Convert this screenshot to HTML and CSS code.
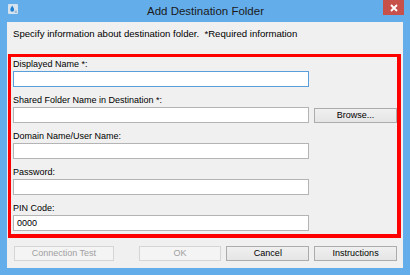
FILE: index.html
```html
<!DOCTYPE html>
<html>
<head>
<meta charset="utf-8">
<link rel="stylesheet" href="styles.css">
</head>
<body>
<div class="window">
  <div class="titlebar">
    <div class="appicon">
      <svg width="10" height="10" viewBox="0 0 10 10">
        <rect x="0" y="0" width="10" height="10" rx="1" fill="#d6e2ee"/>
        <path d="M4.2 1.5 C3.3 3.3 2.3 4.3 2.3 5.8 A1.9 1.9 0 0 0 6.1 5.8 C6.1 4.3 5.1 3.3 4.2 1.5 Z" fill="#1f7fd0"/>
        <rect x="6.8" y="6.5" width="2" height="2.5" fill="#9bb7d3"/>
      </svg>
    </div>
    <div class="title">Add Destination Folder</div>
    <div class="close">
      <svg width="8" height="8" viewBox="0 0 8 8"><path d="M1 1 L7 7 M7 1 L1 7" stroke="#fff" stroke-width="1.8"/></svg>
    </div>
  </div>
  <div class="content">
    <div class="intro">Specify information about destination folder.&nbsp; *Required information</div>
    <div class="group">
      <div class="label">Displayed Name *:</div>
      <div class="row"><div class="input focused"></div></div>
      <div class="label">Shared Folder Name in Destination *:</div>
      <div class="row"><div class="input"></div><div class="btn browse">Browse...</div></div>
      <div class="label">Domain Name/User Name:</div>
      <div class="row"><div class="input"></div></div>
      <div class="label">Password:</div>
      <div class="row"><div class="input"></div></div>
      <div class="label">PIN Code:</div>
      <div class="row last"><div class="input">0000</div></div>
    </div>
    <div class="buttons">
      <div class="btn disabled wide">Connection Test</div>
      <div class="btn disabled ok">OK</div>
      <div class="btn">Cancel</div>
      <div class="btn">Instructions</div>
    </div>
  </div>
</div>
</body>
</html>
```
FILE: styles.css
```css
html, body {
  margin: 0;
  padding: 0;
}
body {
  font-family: "Liberation Sans", Arial, sans-serif;
  font-size: 9px;
  color: #000;
  background: #64adeb;
}
.window {
  width: 410px;
  height: 275px;
  box-sizing: border-box;
  background: #64adeb;
  padding: 0 7px 7px 7px;
  display: flex;
  flex-direction: column;
}
.titlebar {
  height: 22px;
  flex: none;
  display: flex;
  align-items: flex-start;
  position: relative;
}
.appicon {
  margin: 4px 0 0 1px;
  width: 10px;
  height: 10px;
  display: flex;
}
.title {
  flex: 1;
  text-align: center;
  font-size: 11.5px;
  line-height: 22px;
  color: #1a1a1a;
  margin-left: -10px;
}
.close {
  position: absolute;
  right: -1px;
  top: 0;
  width: 21px;
  height: 15px;
  background: #c7504b;
  display: flex;
  align-items: center;
  justify-content: center;
}
.content {
  flex: 1;
  background: #f0f0f0;
  padding: 6px 6px 0 1px;
  display: flex;
  flex-direction: column;
}
.intro {
  font-size: 9.6px;
  line-height: 12px;
  padding-left: 5px;
  margin-bottom: 14px;
}
.group {
  border: 3px solid #ff0000;
  border-right-width: 4px;
  border-bottom-width: 4px;
  padding: 1px 0 3px 2px;
  margin-right: -4px;
}
.label {
  line-height: 12px;
  margin-bottom: 1px;
}
.row {
  display: flex;
  align-items: center;
  gap: 5px;
  margin-bottom: 7px;
}
.row.last {
  margin-bottom: 0;
}
.input {
  width: 296px;
  height: 16px;
  box-sizing: border-box;
  border: 1px solid #b4b4b4;
  background: #fff;
  line-height: 14px;
  padding-left: 3px;
}
.input.focused {
  border-color: #5a9fdb;
}
.btn {
  width: 83px;
  height: 15px;
  box-sizing: border-box;
  border: 1px solid #acacac;
  background: linear-gradient(#f0f0f0, #e5e5e5);
  text-align: center;
  line-height: 13px;
}
.buttons {
  display: flex;
  gap: 5px;
  margin-top: 8px;
  padding-left: 6px;
}
.btn.disabled {
  color: #a0a0a0;
  border-color: #d5d5d5;
  background: #f4f4f4;
}
.btn.wide {
  width: 100px;
}
.btn.ok {
  margin-left: 20px;
}
```
